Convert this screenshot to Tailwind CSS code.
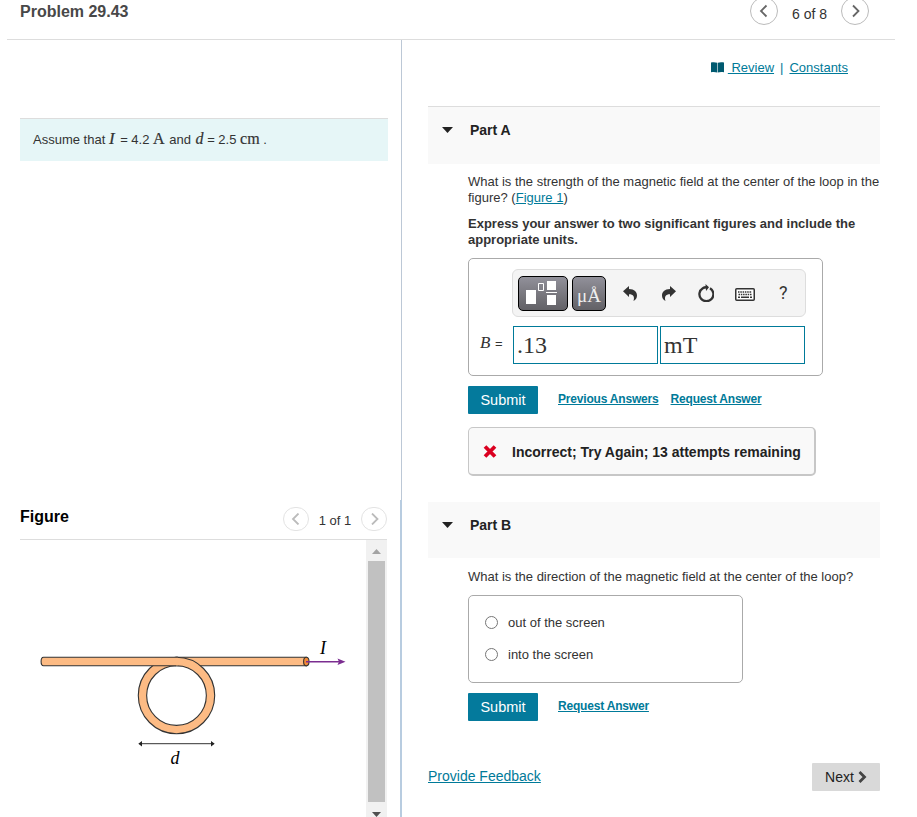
<!DOCTYPE html>
<html lang="en">
<head>
    <meta charset="UTF-8">
    <meta name="viewport" content="width=device-width, initial-scale=1.0">
    <title>Problem 29.43</title>
    <script src="https://cdn.jsdelivr.net/npm/@tailwindcss/browser@4"></script>
</head>
<body class="bg-white h-[817px] overflow-hidden flex flex-col font-['Liberation_Sans',Arial,sans-serif] text-[13px] leading-4 text-[#333]">
    <header class="h-10 shrink-0 mx-[7px] w-[888px] pl-[13px] pr-[26px] border-b border-[#ddd] flex justify-between">
        <h1 class="text-base leading-6 font-bold text-[#484848]">Problem 29.43</h1>
        <div class="flex">
            <button class="size-7 -mt-[3px] rounded-full border border-[#bbb] flex items-center justify-center">
                <svg class="w-3 h-[14px]" viewBox="0 0 12 14" fill="none" stroke="#666" stroke-width="1.8"><path d="M8.500 1.500 3 7l5.500 5.500"/></svg>
            </button>
            <span class="w-[63px] text-center text-sm leading-7">6 of 8</span>
            <button class="size-7 -mt-[3px] rounded-full border border-[#bbb] flex items-center justify-center">
                <svg class="w-3 h-[14px]" viewBox="0 0 12 14" fill="none" stroke="#666" stroke-width="1.8"><path d="M4 1.500 9.500 7 4 12.500"/></svg>
            </button>
        </div>
    </header>

    <div class="flex flex-1 min-h-0">
        <!-- Left column: given values and figure -->
        <aside class="w-[402px] shrink-0 flex flex-col">
            <div class="h-[460px] shrink-0 border-r border-[#bcc8d6] pt-[78px] pl-5">
                <div class="w-[368px] h-[43px] bg-[#e6f6f7] border-t border-[#ddd] pl-[13px] pt-[11px] whitespace-pre leading-[18px]">Assume that <i class="mr-[2px] font-['Liberation_Serif',serif] text-[17px] leading-none [-webkit-text-stroke:0.2px]">I</i> = 4.2 <span class="mr-px font-['Liberation_Serif',serif] text-base leading-none [-webkit-text-stroke:0.2px]">A</span> and <i class="ml-px font-['Liberation_Serif',serif] text-base leading-none [-webkit-text-stroke:0.2px]">d</i> = 2.5 <span class="font-['Liberation_Serif',serif] text-base leading-none [-webkit-text-stroke:0.2px]">cm</span> .</div>
            </div>
            <div class="flex-1 border-r-2 border-[#b8cce0] pl-5 flex flex-col">
                <div class="w-[367px] h-10 shrink-0 border-b border-[#ddd] flex justify-between">
                    <h2 class="text-base leading-[34px] font-bold text-black">Figure</h2>
                    <div class="flex pt-[7px]">
                        <button class="w-[26px] h-6 rounded-full border border-[#e3e3e3] flex items-center justify-center">
                            <svg class="size-3" viewBox="0 0 12 12" fill="none" stroke="#bbb" stroke-width="1.8"><path d="M8.500.5 3 6l5.500 5.500"/></svg>
                        </button>
                        <span class="w-[52px] text-center leading-[27px]">1 of 1</span>
                        <button class="w-[26px] h-6 rounded-full border border-[#e3e3e3] flex items-center justify-center">
                            <svg class="size-3" viewBox="0 0 12 12" fill="none" stroke="#bbb" stroke-width="1.8"><path d="M4 .5 9.500 6 4 11.500"/></svg>
                        </button>
                    </div>
                </div>
                <div class="flex">
                    <svg class="w-[346px] h-[277px]" viewBox="20 540 346 277">
                        <g fill="#fdbb84" stroke="#333" stroke-width="1.1">
                            <path d="M176 657.300H306.300V665.800H176Z"/>
                            <path fill-rule="evenodd" d="M176.500 657.300a38.200 38.200 0 1 1 0 76.400a38.200 38.200 0 1 1 0-76.400ZM176.500 665.800a29.800 29.800 0 1 0 0 59.600a29.800 29.800 0 1 0 0-59.600Z"/>
                            <path stroke="none" d="M155 657.300H178V665.300H155Z"/>
                            <path d="M178 657.300H43.500C40.300 657.300 40.300 665.800 43.500 665.800H176"/>
                            <ellipse cx="306.300" cy="661.600" rx="2.700" ry="4.300" fill="#f58a35"/>
                        </g>
                        <path d="M306 661.700H341" stroke="#7b2d90" stroke-width="1.500"/>
                        <path d="M337.500 658.400 345.500 661.700 337.500 665 339 661.700Z" fill="#7b2d90"/>
                        <path d="M141 743.700H212" stroke="#333"/>
                        <path d="M138.300 743.700 142 741V746.400ZM214.700 743.700 211 741V746.400Z" fill="#222"/>
                        <g class="font-['Liberation_Serif',serif] italic text-[18px]" fill="#000" text-anchor="middle">
                            <text x="323" y="654">I</text>
                            <text x="175" y="764">d</text>
                        </g>
                    </svg>
                    <div class="w-[21px] h-[277px] bg-[#f1f1f1] flex flex-col items-center">
                        <svg class="w-[17px] h-[21px]" viewBox="0 0 17 21"><path d="M4 14h9L8.500 9Z" fill="#a3a3a3"/></svg>
                        <div class="w-[17px] h-[241px] bg-[#c1c1c1]"></div>
                        <svg class="w-[17px] h-[15px]" viewBox="0 0 17 15"><path d="M4 10h9l-4.500 5Z" fill="#505050"/></svg>
                    </div>
                </div>
            </div>
        </aside>

        <!-- Right column: question parts -->
        <main class="w-[478px] pl-[26px]">
            <div class="h-[66px] pt-[19px] pr-8 flex justify-end text-[#007a99]">
                <svg class="w-[13px] h-[11px] mt-[3px] mr-1" viewBox="0 0 13 11"><path d="M0 .5C2 0 4.500 0 6.200 .8V10.500C4.500 9.800 2 9.800 0 10.200ZM13 .5C11 0 8.500 0 6.800 .8V10.500C8.500 9.800 11 9.800 13 10.200Z" fill="#005a70"/></svg>
                <a href="#" class="underline whitespace-pre leading-[18px]"> Review</a>
                <span class="mx-1.5 leading-[18px]">|</span>
                <a href="#" class="underline leading-[18px]">Constants</a>
            </div>

            <section class="h-[396px]">
                <div class="h-[58px] bg-[#f9f9f9] border-t border-[#ddd] pl-[14px] pt-[15px] flex items-start">
                    <svg class="w-[11px] h-[6px] mt-[5px] mr-[17px]" viewBox="0 0 11 6"><path d="M0 0h11L5.500 6Z" fill="#222"/></svg>
                    <h3 class="text-sm leading-4 font-bold text-[#222]">Part A</h3>
                </div>
                <div class="pl-10">
                    <p class="pt-[10px] whitespace-nowrap">What is the strength of the magnetic field at the center of the loop in the<br>figure? (<a href="#" class="underline text-[#007a99]">Figure 1</a>)</p>
                    <p class="pt-[10px] font-bold whitespace-nowrap">Express your answer to two significant figures and include the<br>appropriate units.</p>
                    <div class="mt-[10px] w-[355px] h-[118px] border border-[#aaa] rounded-[5px] pt-[10px] pl-[11px]">
                        <div class="ml-8 w-[294px] h-12 bg-[#f4f4f4] border border-[#ddd] rounded-md flex items-center pl-[5px]">
                            <button class="w-[50px] h-[35px] rounded-[5px] border border-black bg-linear-to-b from-[#92919a] to-[#626166]">
                                <svg class="w-12 h-[33px]" viewBox="0 0 48 33" fill="#fff"><path d="M7 13h10v14H7ZM28 4h9v9H28ZM28 18h9v10H28ZM27 15h11v1H27Z"/><path d="M19.500 6.500h5v7h-5Z" fill="none" stroke="#fff"/></svg>
                            </button>
                            <button class="ml-1 w-[34px] h-[35px] rounded-[5px] border border-black bg-linear-to-b from-[#92919a] to-[#626166] text-[#eee] font-['Liberation_Serif',serif] text-[19px] leading-[37px]">μÅ</button>
                            <svg class="ml-[17px] w-[14px] h-[15px]" viewBox="0 0 14 15"><path d="M0 5.300 6 0V3C11.500 3 14 6 14 9.500C14 12 12.800 13.800 10.500 15C11.800 11 10.500 8.300 6 8.300V11Z" fill="#333"/></svg>
                            <svg class="ml-[25px] w-[14px] h-[15px]" viewBox="0 0 14 15"><path d="M14 5.300 8 0V3C2.500 3 0 6 0 9.500C0 12 1.200 13.800 3.500 15C2.200 11 3.500 8.300 8 8.300V11Z" fill="#333"/></svg>
                            <svg class="ml-[22px] w-4 h-[18px]" viewBox="0 0 16 18"><path d="M12 4.200A7 7 0 1 1 4.800 4.200Q6.500 3 9.500 3.300" fill="none" stroke="#333" stroke-width="2.300"/><path d="M7.500 0 11 3.300 8 7Z" fill="#333"/></svg>
                            <svg class="ml-[21px] mt-[3px] w-5 h-[13px]" viewBox="0 0 20 13"><rect x=".75" y=".75" width="18.500" height="11.500" rx="1" fill="#fff" stroke="#333" stroke-width="1.500"/><path d="M3 4h14M3.500 6.500h13" stroke="#333" stroke-width="1.700" stroke-dasharray="1.500 .8"/><path d="M3 9.300h2M6 9.300h8M15 9.300h2" stroke="#333" stroke-width="1.500"/></svg>
                            <span class="ml-6 font-[Roboto,sans-serif] text-lg leading-none">?</span>
                        </div>
                        <div class="mt-[9px] flex items-center h-[38px]">
                            <span class="w-[33px] -mt-[3px] whitespace-pre"><i class="font-['Liberation_Serif',serif] text-[17px] mr-px">B</i> =</span>
                            <div class="w-[145px] h-[38px] border border-[#007a99] pl-[3px] font-['Liberation_Serif',serif] text-2xl leading-[36px]">.13</div>
                            <div class="ml-0.5 w-[145px] h-[38px] border border-[#007a99] pl-[3px] font-['Liberation_Serif',serif] text-2xl leading-[36px]">mT</div>
                        </div>
                    </div>
                    <div class="mt-[10px] flex text-xs font-bold text-[#007a99]">
                        <button class="w-[70px] h-7 pt-px rounded-[1px] bg-[#047a9c] text-white text-[14.5px] font-normal">Submit</button>
                        <a href="#" class="ml-5 mt-[5px] underline tracking-[-0.19px]">Previous Answers</a>
                        <a href="#" class="ml-3 mt-[5px] underline tracking-[-0.19px]">Request Answer</a>
                    </div>
                    <div class="mt-[13px] w-[348px] h-[49px] rounded-[5px] border border-[#c7c7c7] border-r-2 border-b-2 bg-[#f9f9f9] pl-[14px] flex items-center">
                        <svg class="w-[14px] h-[13px]" viewBox="0 0 14 13"><path d="m2 1.500 10 10M12 1.500l-10 10" stroke="#db0020" stroke-width="3.800"/></svg>
                        <span class="ml-[15px] mt-0.5 text-sm font-bold text-[#222] whitespace-nowrap">Incorrect; Try Again; 13 attempts remaining</span>
                    </div>
                </div>
            </section>

            <section>
                <div class="h-14 bg-[#f9f9f9] pl-[14px] pt-[15px] flex items-start">
                    <svg class="w-[11px] h-[6px] mt-[5px] mr-[17px]" viewBox="0 0 11 6"><path d="M0 0h11L5.500 6Z" fill="#222"/></svg>
                    <h3 class="text-sm leading-4 font-bold text-[#222]">Part B</h3>
                </div>
                <div class="pl-10">
                    <p class="pt-[11px] whitespace-nowrap">What is the direction of the magnetic field at the center of the loop?</p>
                    <div class="mt-[10px] w-[275px] h-[88px] border border-[#aaa] rounded-[5px] pl-4 pt-[18px] flex flex-col gap-4">
                        <label class="h-4 flex items-center gap-[10px]"><input type="radio" name="direction" class="size-[13px]"><span class="mt-0.5">out of the screen</span></label>
                        <label class="h-4 flex items-center gap-[10px]"><input type="radio" name="direction" class="size-[13px]"><span class="mt-0.5">into the screen</span></label>
                    </div>
                    <div class="mt-[10px] flex text-xs font-bold text-[#007a99]">
                        <button class="w-[70px] h-7 pt-px rounded-[1px] bg-[#047a9c] text-white text-[14.5px] font-normal">Submit</button>
                        <a href="#" class="ml-5 mt-[5px] underline tracking-[-0.19px]">Request Answer</a>
                    </div>
                </div>
            </section>

            <div class="mt-[42px] flex justify-between text-sm">
                <a href="#" class="mt-[3px] underline text-[#007a99]">Provide Feedback</a>
                <button class="w-[68px] h-7 rounded-[1px] bg-[#d9d9d9] flex items-center justify-center gap-1 text-[#222]">
                    Next
                    <svg class="w-[9px] h-3" viewBox="0 0 9 12"><path d="m1.500 1 5 5-5 5" fill="none" stroke="#444" stroke-width="2.800"/></svg>
                </button>
            </div>
        </main>
    </div>
</body>
</html>
